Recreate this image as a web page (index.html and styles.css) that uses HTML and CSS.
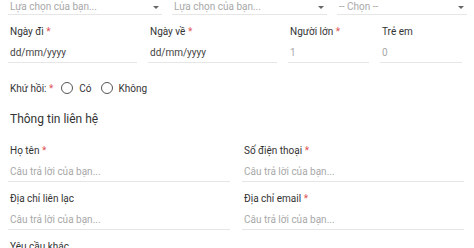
FILE: index.html
```html
<!DOCTYPE html>
<html lang="vi">
<head>
  <meta charset="UTF-8">
  <meta name="viewport" content="width=device-width, initial-scale=1.0">
  <title>Đặt vé</title>
  <link rel="stylesheet" href="styles.css">
</head>
<body>
  <div class="form">
    <div class="row-selects">
      <div class="select"><span>Lựa chọn của bạn...</span><i class="caret"></i></div>
      <div class="select"><span>Lựa chọn của bạn...</span><i class="caret"></i></div>
      <div class="select"><span>-- Chọn --</span><i class="caret"></i></div>
    </div>

    <div class="row-dates">
      <div class="field">
        <label>Ngày đi <b class="req">*</b></label>
        <input type="text" placeholder="dd/mm/yyyy" class="input dark">
      </div>
      <div class="field">
        <label>Ngày về <b class="req">*</b></label>
        <input type="text" placeholder="dd/mm/yyyy" class="input dark">
      </div>
      <div class="field">
        <label>Người lớn <b class="req">*</b></label>
        <input type="text" placeholder="1" class="input">
      </div>
      <div class="field">
        <label>Trẻ em</label>
        <input type="text" placeholder="0" class="input">
      </div>
    </div>

    <div class="round-trip">
      <span class="rt-label">Khứ hồi: <b class="req">*</b></span>
      <span class="radio"><i class="circle"></i>Có</span>
      <span class="radio"><i class="circle"></i>Không</span>
    </div>

    <h3 class="section-title">Thông tin liên hệ</h3>

    <div class="row-contact">
      <div class="field">
        <label>Họ tên <b class="req">*</b></label>
        <input type="text" placeholder="Câu trả lời của bạn..." class="input">
      </div>
      <div class="field">
        <label>Số điện thoại <b class="req">*</b></label>
        <input type="text" placeholder="Câu trả lời của bạn..." class="input">
      </div>
      <div class="field">
        <label>Địa chỉ liên lạc</label>
        <input type="text" placeholder="Câu trả lời của bạn..." class="input">
      </div>
      <div class="field">
        <label>Địa chỉ email <b class="req">*</b></label>
        <input type="text" placeholder="Câu trả lời của bạn..." class="input">
      </div>
      <div class="field">
        <label>Yêu cầu khác</label>
        <input type="text" placeholder="Câu trả lời của bạn..." class="input">
      </div>
    </div>
  </div>
</body>
</html>
```

FILE: styles.css
```css
body {
  margin: 0;
  padding: 0;
  background-color: #ffffff;
  font-family: Roboto, "Noto Sans", Arial, sans-serif;
  font-size: 10px;
  color: #333;
  overflow: hidden;
}

.form {
  padding: 0 8px;
}

.row-selects {
  display: grid;
  grid-template-columns: 154px 155px 130px;
  column-gap: 10px;
}

.select {
  display: flex;
  justify-content: space-between;
  align-items: center;
  height: 14px;
  padding: 0 3px 0 2px;
  border-bottom: 1px solid #e6e6e6;
  color: #a8a8a8;
  line-height: 12px;
}

.caret {
  width: 0;
  height: 0;
  border-left: 3px solid transparent;
  border-right: 3px solid transparent;
  border-top: 3px solid #666;
}

.row-dates {
  display: grid;
  grid-template-columns: 129px 129px 81px 82px;
  column-gap: 11px;
  margin-top: 9px;
}

.field label {
  display: block;
  line-height: 16px;
  padding-left: 2px;
  margin-bottom: 3px;
}

.req {
  color: #e05555;
  font-weight: normal;
}

.input {
  display: block;
  width: 100%;
  box-sizing: border-box;
  height: 20px;
  margin: 0;
  padding: 0 2px;
  border: none;
  border-bottom: 1px solid #e6e6e6;
  font-family: inherit;
  font-size: 10px;
  color: #333;
  outline: none;
  background: transparent;
}

.input::placeholder {
  color: #a8a8a8;
}

.input.dark::placeholder {
  color: #444;
}

.round-trip {
  display: flex;
  align-items: center;
  height: 16px;
  margin-top: 17px;
  padding-left: 2px;
}

.rt-label {
  margin-right: 8px;
}

.radio {
  display: flex;
  align-items: center;
  margin-right: 9px;
}

.circle {
  width: 10px;
  height: 10px;
  border: 1.5px solid #555;
  border-radius: 50%;
  margin-right: 6px;
}

.section-title {
  margin: 13px 0 14px;
  padding-left: 2px;
  font-size: 12px;
  font-weight: normal;
  line-height: 20px;
  color: #333;
}

.row-contact {
  display: grid;
  grid-template-columns: 222px 222px;
  column-gap: 12px;
  row-gap: 9px;
}
```
